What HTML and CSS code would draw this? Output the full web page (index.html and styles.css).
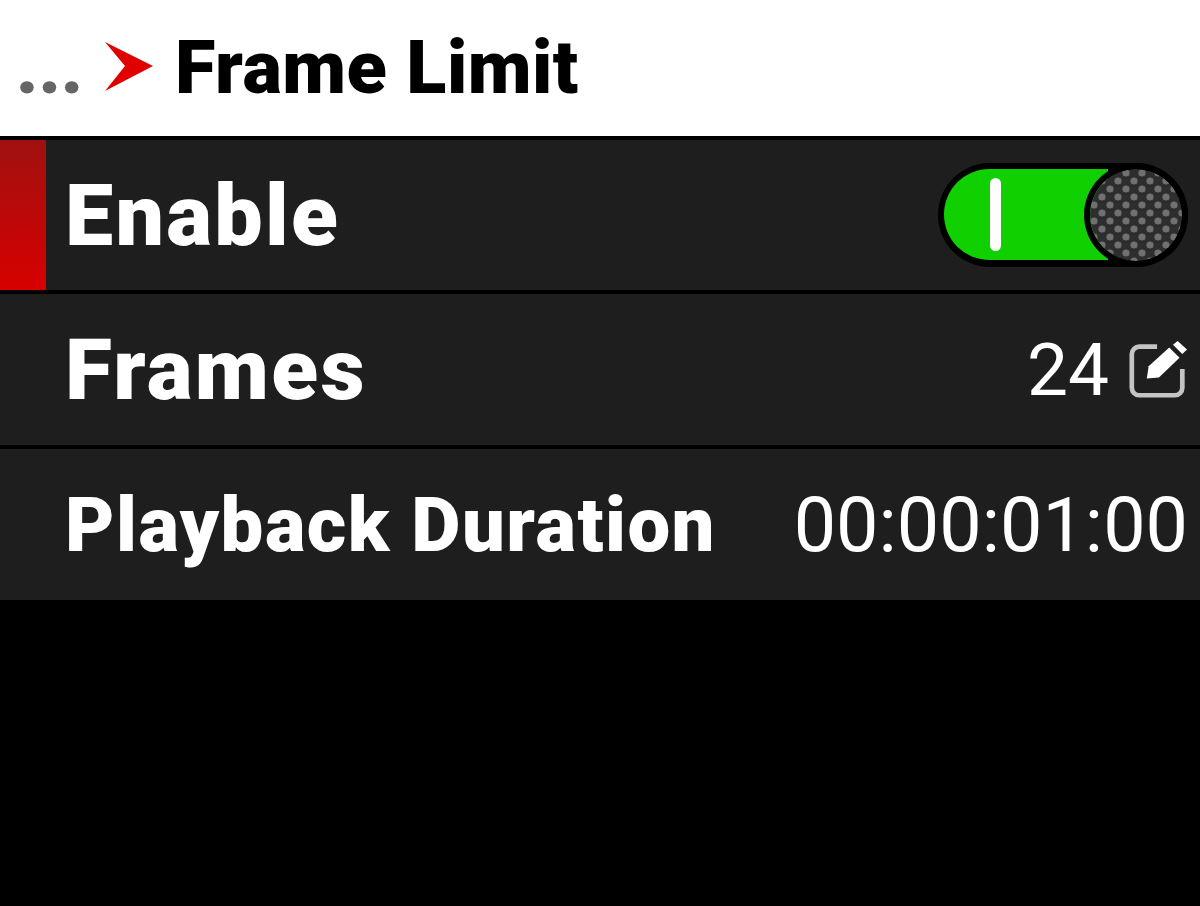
FILE: index.html
```html
<!DOCTYPE html>
<html lang="en">

<head>
    <title>Frame Limit</title>
    <link rel="stylesheet" href="styles.css">
</head>

<body>
    <header class="titleBar">
        <span class="crumbDots">...</span>
        <svg class="crumbArrow" width="48" height="50" viewBox="0 0 48 50">
            <polygon points="0,0 48,24 0,49 20,24" fill="#e00000" />
        </svg>
        <h1 class="pageTitle">Frame Limit</h1>
    </header>
    <div class="menu">
        <div class="row">
            <div class="rowMarker"></div>
            <span class="rowLabel">Enable</span>
            <div class="toggle">
                <div class="toggleFill"><span class="toggleBar"></span></div>
                <svg class="toggleKnob" width="92" height="92" viewBox="0 0 92 92">
                    <defs>
                        <pattern id="knobDots" width="16" height="16" patternUnits="userSpaceOnUse">
                            <rect width="16" height="16" fill="#2e2e2e" />
                            <circle cx="4" cy="4" r="3.6" fill="#707070" />
                            <circle cx="12" cy="12" r="3.6" fill="#707070" />
                        </pattern>
                    </defs>
                    <circle cx="46" cy="46" r="46" fill="url(#knobDots)" />
                </svg>
            </div>
        </div>
        <div class="row">
            <span class="rowLabel">Frames</span>
            <div class="rowValue">
                <span class="frameCount">24</span>
                <svg class="editIcon" width="58" height="58" viewBox="0 0 62 62">
                    <path d="M30 6H11a8 8 0 0 0-8 8v36a8 8 0 0 0 8 8h38a8 8 0 0 0 8-8V30" fill="none" stroke="#c4c4c4" stroke-width="5" />
                    <path d="M19 40l2-13L43 7l11 11-22 21z" fill="#fff" />
                    <path d="M47 4l5-4 10 9-5 5z" fill="#fff" />
                </svg>
            </div>
        </div>
        <div class="row">
            <span class="rowLabel rowLabelSmall">Playback Duration</span>
            <span class="duration">00:00:01:00</span>
        </div>
    </div>
</body>

</html>
```

FILE: styles.css
```css
body {
    margin: 0;
    height: 906px;
    overflow: hidden;
    background-color: #000;
    font-family: Roboto, "Liberation Sans", sans-serif;
}

/* top bar */
.titleBar {
    height: 136px;
    box-sizing: border-box;
    padding: 0 0 0 16px;
    display: flex;
    align-items: center;
    background-color: #fff;
}

.crumbDots {
    width: 89px;
    font-size: 74px;
    font-weight: 900;
    line-height: 72px;
    color: #666;
}

.crumbArrow {
    margin-top: -2px;
}

.pageTitle {
    margin: 0 0 0 22px;
    font-size: 74px;
    font-weight: 900;
    line-height: 72px;
    letter-spacing: 0.5px;
    color: #000;
}

/* menu rows */
.menu {
    margin-top: 4px;
    display: flex;
    flex-direction: column;
    gap: 4px;
}

.row {
    position: relative;
    height: 151px;
    box-sizing: border-box;
    padding: 0 12px 0 65px;
    display: flex;
    align-items: center;
    justify-content: space-between;
    background-color: #1e1e1e;
    color: #fff;
}

.row:first-child {
    height: 150px;
}

.rowMarker {
    position: absolute;
    left: 0;
    top: 0;
    width: 46px;
    height: 100%;
    background: linear-gradient(#a01010, #d80000);
}

.rowLabel {
    font-size: 86px;
    font-weight: 900;
    letter-spacing: 2.3px;
}

.rowLabelSmall {
    font-size: 76px;
    letter-spacing: 1.5px;
}

.rowValue {
    display: flex;
    align-items: center;
    gap: 20px;
}

.frameCount {
    font-size: 73px;
}

.duration {
    font-size: 75.5px;
}

.editIcon {
    margin-right: 1px;
}

/* on/off switch */
.toggle {
    position: relative;
    width: 250px;
    height: 104px;
    box-sizing: border-box;
    padding: 6px 80px 6px 6px;
    border-radius: 52px;
    background-color: #000;
}

.toggleFill {
    height: 91px;
    padding: 9px 0 9px 46px;
    box-sizing: border-box;
    border-radius: 46px 0 0 46px;
    background-color: #10d000;
}

.toggleBar {
    display: block;
    width: 11px;
    height: 73px;
    border-radius: 6px;
    background-color: #fff;
}

.toggleKnob {
    position: absolute;
    right: 6px;
    top: 6px;
    border-radius: 50%;
    box-shadow: 0 0 0 6px #000;
}
```
